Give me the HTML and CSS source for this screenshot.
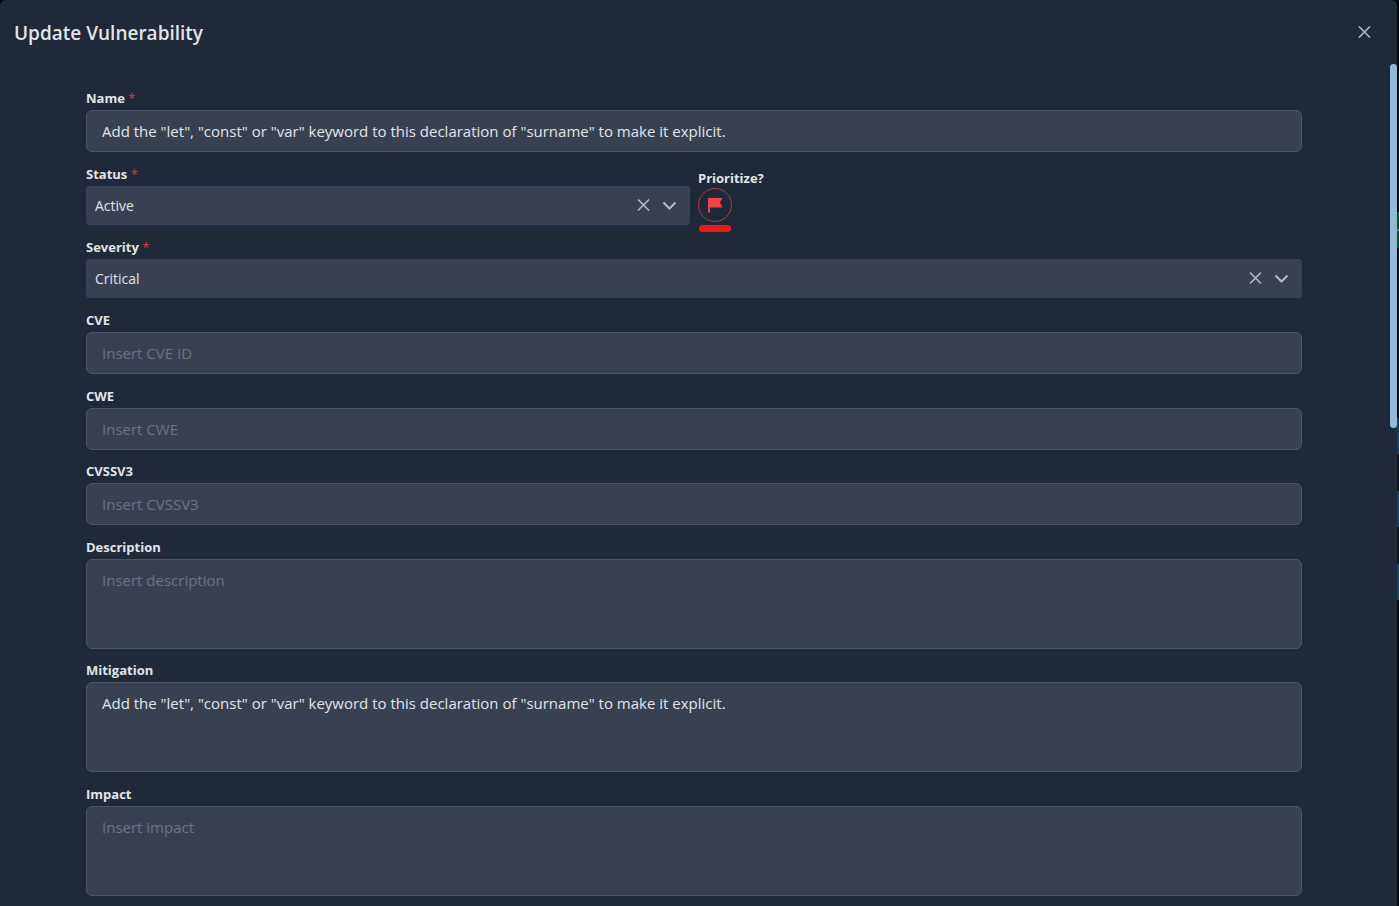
FILE: index.html
```html
<!DOCTYPE html>
<html lang="en">
<head>
<meta charset="utf-8">
<title>Update Vulnerability</title>
<link rel="stylesheet" href="styles.css">
</head>
<body>
<main class="modal" role="dialog" aria-labelledby="modal-title">
  <header class="modal-header">
    <h1 class="modal-title" id="modal-title">Update Vulnerability</h1>
    <button class="icon-button" type="button" aria-label="Close">
      <svg class="icon" viewBox="0 0 16 16"><path d="M3 1.500l11 11M14 1.500l-11 11"/></svg>
    </button>
  </header>
  <form class="form">
    <div class="field">
      <label class="label" for="name">Name <span class="required">*</span></label>
      <input class="control" id="name" type="text" value="Add the &quot;let&quot;, &quot;const&quot; or &quot;var&quot; keyword to this declaration of &quot;surname&quot; to make it explicit.">
    </div>
    <div class="row">
      <div class="field">
        <label class="label" for="status">Status <span class="required">*</span></label>
        <div class="select-box">
          <select class="select" id="status"><option>Active</option></select>
          <button class="icon-button" type="button" aria-label="Clear status">
            <svg class="icon" viewBox="0 0 16 16"><path d="M3 1.500l11 11M14 1.500l-11 11"/></svg>
          </button>
          <svg class="icon chevron" viewBox="0 0 16 16"><path d="M2.500 4.500l6 6 6-6"/></svg>
        </div>
      </div>
      <div class="field priority">
        <label class="priority-label" for="prioritize">Prioritize?</label>
        <button class="flag-button" id="prioritize" type="button">
          <svg class="flag" viewBox="0 0 16 16"><path d="M1 1h14.500l-2.500 4.500 2.500 5H3V15.500H1z"/></svg>
        </button>
      </div>
    </div>
    <div class="field">
      <label class="label" for="severity">Severity <span class="required">*</span></label>
      <div class="select-box">
        <select class="select" id="severity"><option>Critical</option></select>
        <button class="icon-button" type="button" aria-label="Clear severity">
          <svg class="icon" viewBox="0 0 16 16"><path d="M3 1.500l11 11M14 1.500l-11 11"/></svg>
        </button>
        <svg class="icon chevron" viewBox="0 0 16 16"><path d="M2.500 4.500l6 6 6-6"/></svg>
      </div>
    </div>
    <div class="field">
      <label class="label" for="cve">CVE</label>
      <input class="control" id="cve" type="text" placeholder="Insert CVE ID">
    </div>
    <div class="field field-tight">
      <label class="label" for="cwe">CWE</label>
      <input class="control" id="cwe" type="text" placeholder="Insert CWE">
    </div>
    <div class="field">
      <label class="label" for="cvss">CVSSV3</label>
      <input class="control" id="cvss" type="text" placeholder="Insert CVSSV3">
    </div>
    <div class="field field-tight">
      <label class="label" for="description">Description</label>
      <textarea class="control area" id="description" placeholder="Insert description"></textarea>
    </div>
    <div class="field">
      <label class="label" for="mitigation">Mitigation</label>
      <textarea class="control area" id="mitigation">Add the "let", "const" or "var" keyword to this declaration of "surname" to make it explicit.</textarea>
    </div>
    <div class="field">
      <label class="label" for="impact">Impact</label>
      <textarea class="control area" id="impact" placeholder="Insert impact"></textarea>
    </div>
  </form>
  <div class="scroll-thumb"></div>
</main>
</body>
</html>
```

FILE: styles.css
```css
* {
  box-sizing: border-box;
}

body {
  margin: 0;
  padding-right: 2px;
  min-height: 100vh;
  display: flex;
  font-family: "Segoe UI", "Open Sans", "Noto Sans", sans-serif;
  color: #e2e4e8;
  background:
    linear-gradient(#04070f 212px, #06521f 212px 229px, #6b7280 229px 231px, #06521f 231px 248px,
      #04070f 248px 418px, #17405c 418px 454px, #10171f 454px 491px, #17405c 491px 527px,
      #10171f 527px 564px, #17405c 564px 600px, #070b12 600px);
}

button,
input,
select,
textarea {
  font-family: inherit;
  color: inherit;
}

.modal {
  position: relative;
  flex: 1;
  background: #202937;
  border-radius: 6px;
}

.modal-header {
  display: flex;
  align-items: center;
  justify-content: space-between;
  height: 64px;
  padding: 2px 23px 0 14px;
}

.modal-title {
  margin: 0;
  font-size: 19px;
  font-weight: 600;
}

.icon-button {
  display: flex;
  padding: 2px;
  border: 0;
  background: none;
  color: #b6bac1;
}

.icon {
  width: 16px;
  height: 16px;
  fill: none;
  stroke: currentColor;
  stroke-width: 1.6;
}

.form {
  padding: 20px 95px 9px 86px;
}

.field {
  display: flex;
  flex-direction: column;
  margin-bottom: 8px;
}

.field-tight {
  margin-bottom: 7px;
}

.row {
  display: grid;
  grid-template-columns: 1fr 1fr;
  gap: 8px;
}

.label,
.priority-label {
  font-size: 13px;
  font-weight: 700;
  line-height: 20px;
}

.label {
  height: 26px;
  padding-top: 4px;
}

.required {
  color: #e5383b;
  font-weight: 400;
}

.control {
  width: 100%;
  height: 42px;
  padding: 8px 15px;
  border: 1px solid #4b5563;
  border-radius: 6px;
  background: #394151;
  font-size: 15px;
  line-height: 24px;
}

.control::placeholder {
  color: #6b7280;
  opacity: 1;
}

.area {
  display: block;
  height: 90px;
  resize: none;
}

.select-box {
  display: flex;
  align-items: center;
  gap: 8px;
  height: 39px;
  padding-right: 12px;
  border: 1px solid #334260;
  border-radius: 3px;
  background: #394151;
}

.select {
  flex: 1;
  height: 100%;
  padding: 0 8px;
  border: 0;
  appearance: none;
  background: none;
  font-size: 14px;
}

.chevron {
  color: #b6bac1;
  stroke-width: 2;
}

.priority {
  align-items: flex-start;
  padding-top: 8px;
}

.flag-button {
  position: relative;
  display: flex;
  align-items: center;
  justify-content: center;
  width: 34px;
  height: 34px;
  padding: 0;
  border: 1px solid #b03a42;
  border-radius: 50%;
  background: none;
}

.flag-button::after {
  content: "";
  position: absolute;
  top: 36px;
  left: 0;
  width: 32px;
  height: 7px;
  border-radius: 4px;
  background: #e81c1c;
}

.flag {
  width: 16px;
  height: 16px;
  fill: #ef4444;
}

.scroll-thumb {
  position: absolute;
  top: 64px;
  right: 0;
  width: 7px;
  height: 364px;
  border-radius: 4px;
  background: #93bbd9;
}
```
